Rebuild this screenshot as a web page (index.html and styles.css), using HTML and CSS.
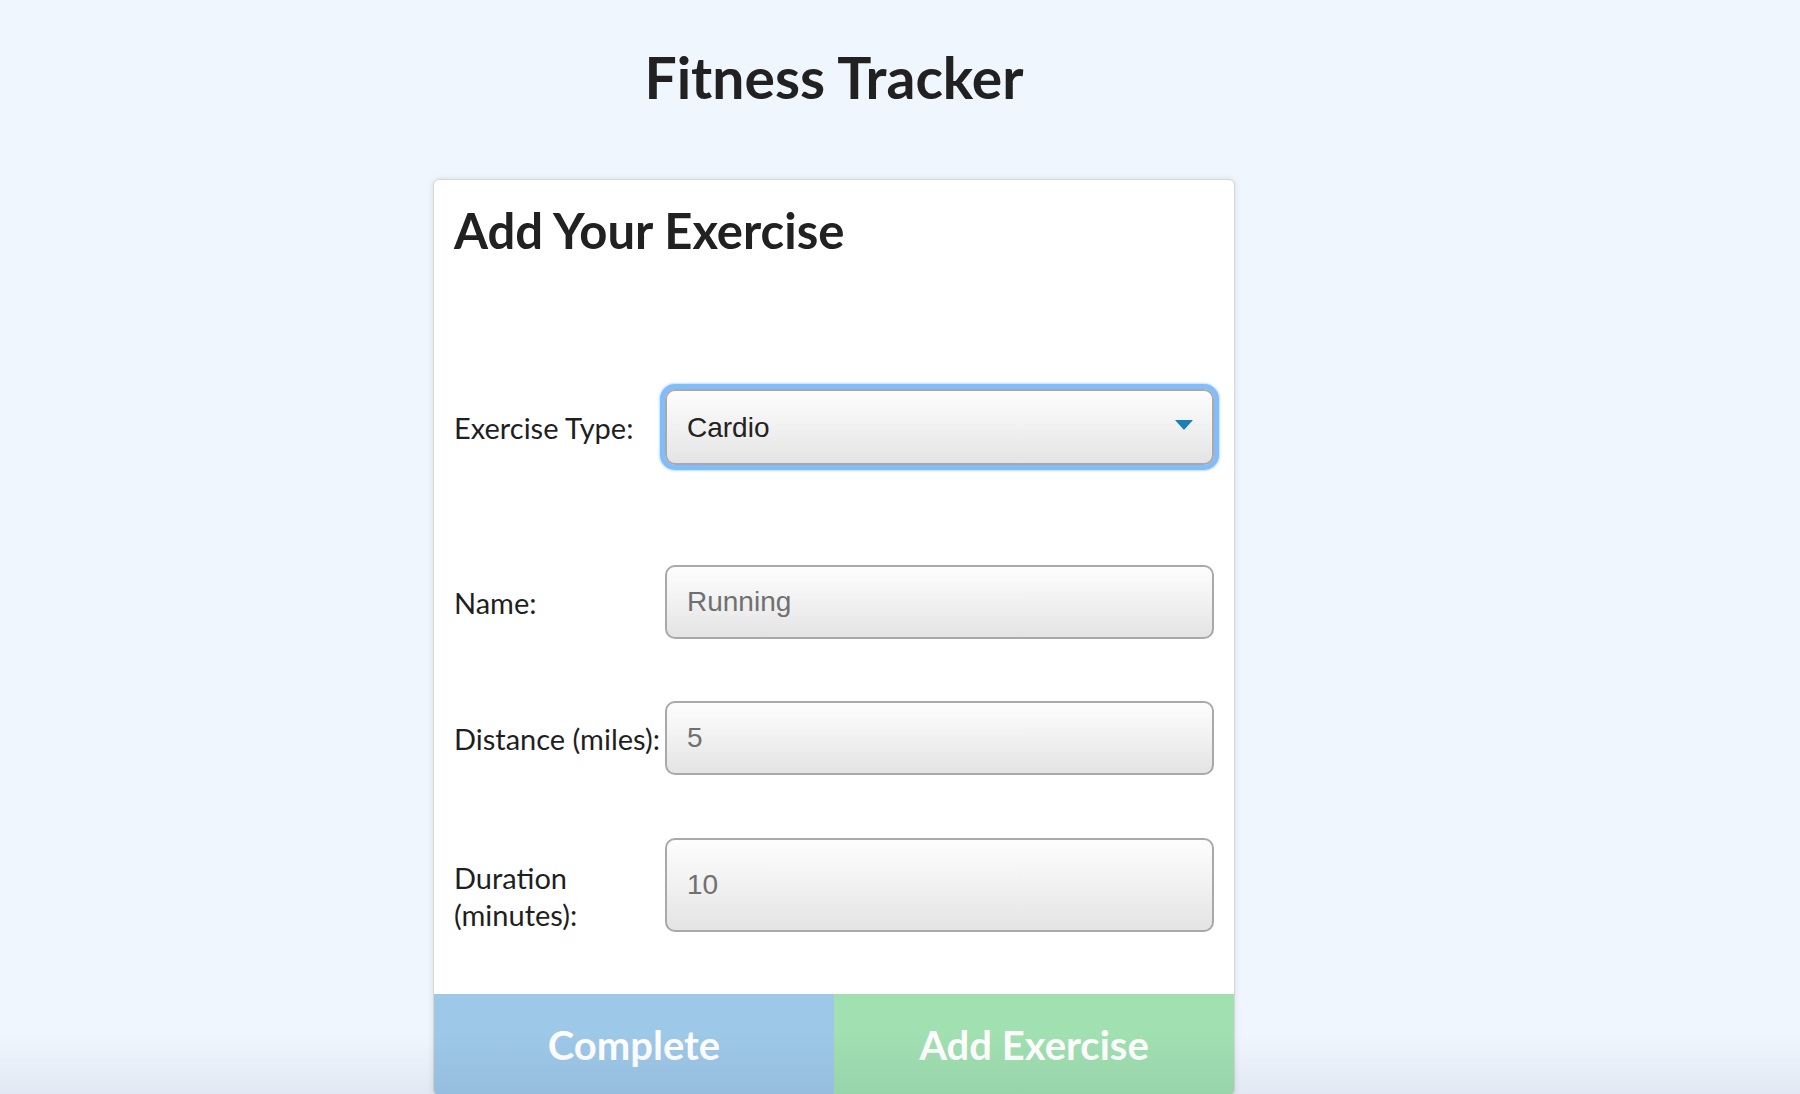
FILE: index.html
```html
<!DOCTYPE html>
<html lang="en">
<head>
<meta charset="utf-8">
<title>Fitness Tracker</title>
<link rel="stylesheet" href="styles.css">
</head>
<body>
<main class="page">
  <h1 class="title">Fitness Tracker</h1>
  <section class="card">
    <div class="card-body">
      <h2 class="card-title">Add Your Exercise</h2>
      <form class="form">
        <div class="row row-type">
          <label class="label" for="type">Exercise Type:</label>
          <div class="select-wrap">
            <select id="type" class="field select">
              <option>Cardio</option>
              <option>Resistance</option>
            </select>
            <svg class="caret" width="18" height="10" viewBox="0 0 18 10" aria-hidden="true"><path d="M0.5 0H17.5Q18 0 17.6 0.5L9.4 9.6Q9 10 8.6 9.6L0.4 0.5Q0 0 0.5 0Z" fill="#1a80b6"/></svg>
          </div>
        </div>
        <div class="row row-name">
          <label class="label" for="name">Name:</label>
          <input id="name" class="field input" type="text" value="Running">
        </div>
        <div class="row row-distance">
          <label class="label" for="distance">Distance (miles):</label>
          <input id="distance" class="field input" type="text" value="5">
        </div>
        <div class="row row-duration">
          <label class="label label-tall" for="duration">Duration (minutes):</label>
          <input id="duration" class="field input input-tall" type="text" value="10">
        </div>
      </form>
    </div>
    <div class="actions">
      <button class="btn btn-complete" type="button">Complete</button>
      <button class="btn btn-add" type="button">Add Exercise</button>
    </div>
  </section>
</main>
<div class="bottom-fade"></div>
</body>
</html>
```

FILE: styles.css
```css
html, body {
  margin: 0;
  padding: 0;
  height: 1094px;
  overflow: hidden;
}

body {
  background: #eff6fe;
  font-family: "Lato", "Liberation Sans", sans-serif;
  color: #222222;
}

.page {
  width: 802px;
  margin-left: 433px;
}

.title {
  margin: 41px 0 0;
  font-size: 57px;
  line-height: 72px;
  font-weight: 700;
  text-align: center;
  color: #212121;
}

.card {
  margin-top: 66px;
  background: #ffffff;
  border: 1px solid #d6d6d6;
  border-radius: 6px;
  box-shadow: 0 0 6px rgba(0, 0, 0, 0.10);
  overflow: hidden;
}

.card-body {
  padding: 0 20px;
}

.card-title {
  margin: 20px 0 0;
  font-size: 49px;
  line-height: 60px;
  font-weight: 700;
  color: #212121;
}

.form {
  display: flex;
  flex-direction: column;
}

.row {
  display: grid;
  grid-template-columns: 211px 1fr;
  align-items: center;
}

.row-type { margin-top: 129px; }
.row-name { margin-top: 100px; }
.row-distance { margin-top: 62px; }
.row-duration { margin-top: 62px; }

.label {
  font-family: "Lato", sans-serif;
  font-size: 29px;
  line-height: 37px;
  color: #1f1f1f;
  white-space: normal;
}

.label-tall {
  margin-top: 22px;
  padding-right: 40px;
}

.field {
  box-sizing: border-box;
  width: 100%;
  height: 74px;
  margin: 0;
  padding: 0 20px;
  border: 2px solid #a9a9a9;
  border-radius: 10px;
  background: linear-gradient(to bottom, #fdfdfd 0%, #f1f1f1 50%, #e4e4e4 100%);
  font-family: "Liberation Sans", Arial, sans-serif;
  font-size: 28px;
  outline: none;
  -webkit-appearance: none;
  appearance: none;
}

.input {
  color: #707070;
}

.input-tall {
  height: 94px;
}

.select-wrap {
  position: relative;
}

.select {
  height: 76px;
  color: #222222;
  box-shadow: 0 0 0 5px #80bdfa, 0 0 2px 6px rgba(128, 189, 250, 0.5);
}

.caret {
  position: absolute;
  right: 21px;
  top: 31px;
  pointer-events: none;
}

.actions {
  display: flex;
  margin-top: 61px;
}

.btn {
  flex: 1 1 0;
  height: 101px;
  margin: 0;
  padding: 0;
  border: none;
  font-family: "Lato", sans-serif;
  font-size: 40px;
  font-weight: 700;
  color: #ffffff;
  cursor: pointer;
}

.btn-complete {
  background: #9ec8e8;
}

.btn-add {
  background: #a1e0b1;
}

.bottom-fade {
  position: fixed;
  left: 0;
  right: 0;
  bottom: 0;
  height: 60px;
  background: linear-gradient(to bottom, rgba(40, 50, 90, 0) 0%, rgba(40, 50, 90, 0.065) 100%);
  pointer-events: none;
}
```
